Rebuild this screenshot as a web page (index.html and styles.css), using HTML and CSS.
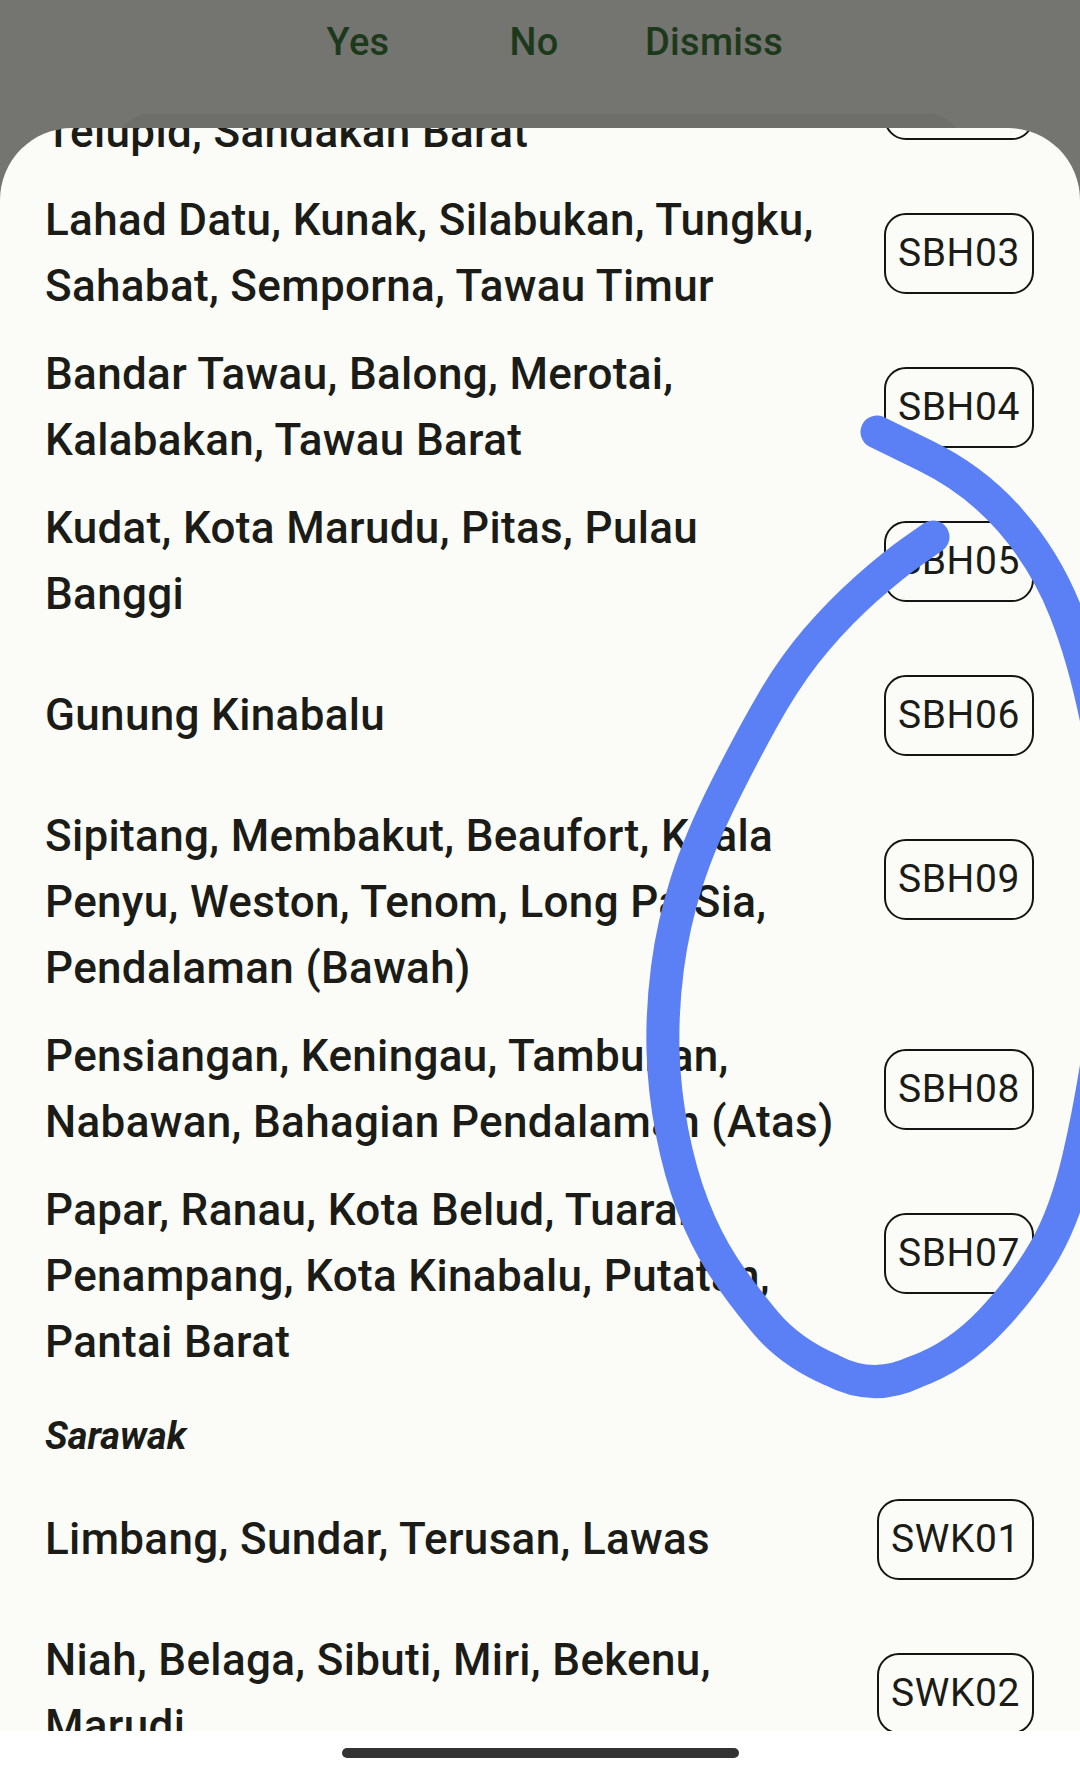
FILE: index.html
```html
<!DOCTYPE html>
<html lang="ms">
<head>
<meta charset="utf-8">
<title>Zon</title>
<link rel="stylesheet" href="styles.css">
</head>
<body>
<div class="scrim">
  <div class="actions">
    <button class="act">Yes</button>
    <button class="act">No</button>
    <button class="act">Dismiss</button>
  </div>
</div>
<div class="sheet">
  <div class="viewport">
    <div class="list">
      <div class="row"><div class="name">Pinangah, Terusan, Kuamut, Beluran, Telupid, Sandakan Barat</div><div class="code">SBH02</div></div>
      <div class="row"><div class="name">Lahad Datu, Kunak, Silabukan, Tungku, Sahabat, Semporna, Tawau Timur</div><div class="code">SBH03</div></div>
      <div class="row"><div class="name">Bandar Tawau, Balong, Merotai, Kalabakan, Tawau Barat</div><div class="code">SBH04</div></div>
      <div class="row"><div class="name">Kudat, Kota Marudu, Pitas, Pulau Banggi</div><div class="code">SBH05</div></div>
      <div class="row"><div class="name">Gunung Kinabalu</div><div class="code">SBH06</div></div>
      <div class="row three"><div class="name">Sipitang, Membakut, Beaufort, Kuala Penyu, Weston, Tenom, Long Pa Sia, Pendalaman (Bawah)</div><div class="code">SBH09</div></div>
      <div class="row"><div class="name">Pensiangan, Keningau, Tambunan, Nabawan, Bahagian Pendalaman (Atas)</div><div class="code">SBH08</div></div>
      <div class="row three"><div class="name">Papar, Ranau, Kota Belud, Tuaran, Penampang, Kota Kinabalu, Putatan, Pantai Barat</div><div class="code">SBH07</div></div>
      <div class="state">Sarawak</div>
      <div class="row"><div class="name">Limbang, Sundar, Terusan, Lawas</div><div class="code">SWK01</div></div>
      <div class="row"><div class="name">Niah, Belaga, Sibuti, Miri, Bekenu, Marudi</div><div class="code">SWK02</div></div>
      <div class="row"><div class="name">Saratok, Betong, Pusa, Meludam, Kabong, Spaoh, Debak, Lingga</div><div class="code">SWK03</div></div>
    </div>
  </div>
</div>
<div class="navbar"><div class="handle"></div></div>
<svg class="ink" width="1080" height="1775" viewBox="0 0 1080 1775" aria-hidden="true">
  <path d="M 933 537 L 913 551 Q 893 565 866.5 588.5 Q 840 612 816.5 639.5 Q 793 667 773 701 Q 753 735 726.5 787.5 Q 700 840 686.5 882.5 Q 673 925 667.5 967.5 Q 662 1010 663 1050 Q 664 1090 672 1131.5 Q 680 1173 693 1206.5 Q 706 1240 723 1266 Q 740 1292 765 1322 Q 790 1352 831.5 1370 Q 873 1392 915 1372 Q 957 1357 991 1321 Q 1025 1285 1045.5 1249 Q 1066 1213 1079 1156.5 Q 1092 1100 1102 1030 Q 1112 960 1112 880 Q 1112 800 1098.5 730 Q 1085 660 1065 610 Q 1045 560 1010 520 Q 975 480 926 456 L 877 432"/>
</svg>
</body>
</html>
```

FILE: styles.css
```css
html, body {
  margin: 0;
  padding: 0;
}
body {
  width: 1080px;
  height: 1775px;
  overflow: hidden;
  background: #747470;
  font-family: Roboto, "Noto Sans", "Liberation Sans", sans-serif;
  color: #1b1c18;
  position: relative;
}
.scrim {
  position: relative;
  height: 128px;
}
.scrim::after {
  content: "";
  position: absolute;
  left: 117px;
  right: 119px;
  top: 114px;
  height: 40px;
  border-radius: 32px 32px 0 0;
  background: #6e6f6a;
}
.actions {
  display: flex;
  gap: 6px;
  padding: 23px 0 0 273px;
}
.act {
  appearance: none;
  border: 0;
  background: none;
  margin: 0;
  min-width: 170px;
  padding: 0 20px;
  font-family: Roboto, "Noto Sans", sans-serif;
  font-weight: 500;
  font-size: 38px;
  line-height: 38px;
  letter-spacing: 0.3px;
  color: #1c3a1b;
  text-align: center;
}
.sheet {
  position: relative;
  z-index: 1;
  height: 1603px;
  background: #fbfcf7;
  border-radius: 72px 72px 0 0;
  overflow: hidden;
}
.viewport {
  height: 1603px;
  overflow: hidden;
}
.list {
  margin-top: -106px;
}
.row {
  display: flex;
  align-items: center;
  gap: 44px;
  padding: 11px 46px 11px 45px;
}
.name {
  flex: 1;
  min-height: 132px;
  display: flex;
  align-items: center;
  font-weight: 500;
  font-size: 44px;
  line-height: 66px;
  letter-spacing: 0.33px;
}
.code {
  flex: none;
  box-sizing: border-box;
  height: 81px;
  display: flex;
  align-items: center;
  padding: 0 12px;
  border: 2.75px solid #141512;
  border-radius: 22px;
  font-weight: 400;
  font-size: 39px;
  line-height: 39px;
  letter-spacing: 0.6px;
  color: #1b1c18;
}
.three {
  align-items: flex-start;
}
.three .code {
  margin-top: 36px;
}
.state {
  padding: 31px 45px 7px;
  font-style: italic;
  font-weight: 700;
  font-size: 38px;
  line-height: 38px;
}
.navbar {
  height: 44px;
  background: #ffffff;
  overflow: hidden;
}
.handle {
  width: 397px;
  height: 10px;
  margin: 17px auto 0;
  border-radius: 5px;
  background: #333333;
}
.ink {
  position: absolute;
  left: 0;
  top: 0;
  pointer-events: none;
  z-index: 5;
}
.ink path {
  fill: none;
  stroke: #5b7ff4;
  stroke-width: 33;
  stroke-linecap: round;
  stroke-linejoin: round;
}
```
